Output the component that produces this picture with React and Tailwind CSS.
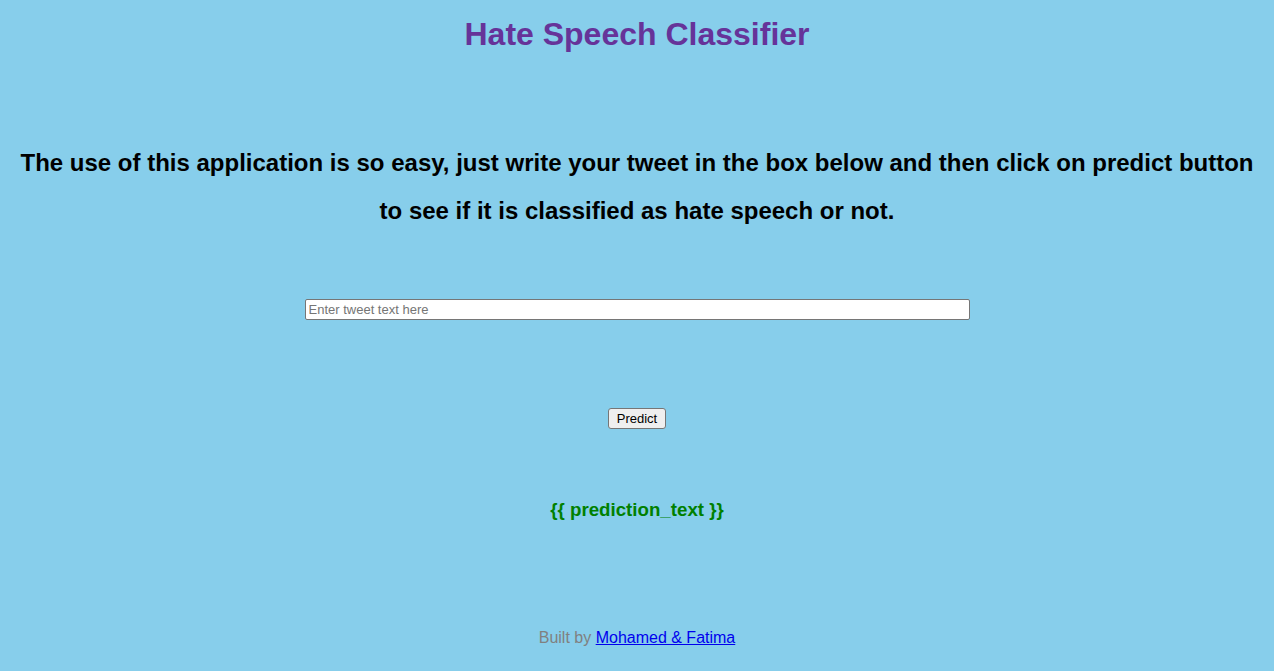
export default function App() {
  return (
    <div
      className="min-h-screen w-full bg-[#87ceeb] flex flex-col items-center text-center"
      style={{ fontFamily: '"Liberation Sans", Arial, sans-serif' }}
    >
      {/* Title */}
      <h1 className="mt-[16px] text-[32px] leading-[37px] font-bold text-[#663399]">
        Hate Speech Classifier
      </h1>

      {/* Description */}
      <p className="mt-[86px] px-[16px] text-[24px] leading-[48px] font-bold text-black">
        The use of this application is so easy, just write your tweet in the box below and then click on predict button to see if it is classified as hate speech or not.
      </p>

      {/* Input */}
      <input
        type="text"
        placeholder="Enter tweet text here"
        className="mt-[64px] w-[665px] h-[21px] px-[3px] bg-white border border-[#767676] rounded-[2px] text-[13px] text-black placeholder:text-[#757575] outline-none"
      />

      {/* Predict button */}
      <button className="mt-[88px] h-[21px] px-[8px] bg-[#efefef] border border-[#767676] rounded-[3px] text-[13px] leading-[17px] text-black">
        Predict
      </button>

      {/* Result */}
      <h3 className="mt-[70px] text-[18.72px] leading-[22px] font-bold text-[#008000]">
        {'{{ prediction_text }}'}
      </h3>

      {/* Footer */}
      <p className="mt-[108px] text-[16px] leading-[18px] text-[#808080]">
        Built by{' '}
        <a href="#" className="text-[#0000ee] underline">
          Mohamed &amp; Fatima
        </a>
      </p>
    </div>
  );
}
